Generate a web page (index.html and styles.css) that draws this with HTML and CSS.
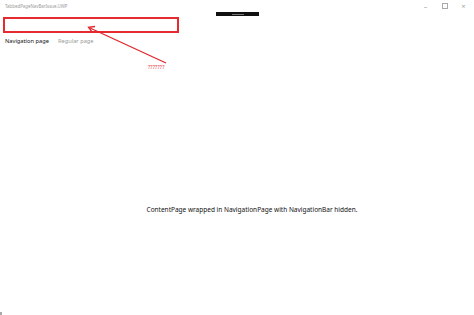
FILE: index.html
```html
<!DOCTYPE html>
<html>
<head>
<meta charset="utf-8">
<link rel="stylesheet" href="styles.css">
</head>
<body>
<div class="window">
  <div class="titlebar">
    <span class="app-title">TabbedPageNavBarIssue.UWP</span>
    <div class="caption-buttons">
      <span class="cap">&#8211;</span>
      <span class="cap cap-max"></span>
      <span class="cap">&#215;</span>
    </div>
  </div>
  <div class="navbar-space"></div>
  <div class="tabs">
    <span class="tab active">Navigation page</span>
    <span class="tab">Regular page</span>
  </div>
  <div class="content">
    <p class="message">ContentPage wrapped in NavigationPage with NavigationBar hidden.</p>
  </div>
  <div class="frame-counter"><span class="frame-mark"></span></div>
  <div class="highlight-box"></div>
  <svg class="arrow" width="474" height="80" viewBox="0 0 474 80">
    <line x1="166" y1="63" x2="90" y2="28" stroke="#e0262b" stroke-width="1.3"/>
    <polyline points="95,26.5 88.5,27.3 92.5,32.5" fill="none" stroke="#e0262b" stroke-width="1.3"/>
  </svg>
  <span class="note">???????</span>
  <span class="corner-mark"></span>
</div>
</body>
</html>
```
FILE: styles.css
```css
html, body {
  margin: 0;
  padding: 0;
  background: #ffffff;
}
body {
  font-family: "Noto Sans", "Open Sans", sans-serif;
  color: #111;
}
.window {
  position: relative;
  width: 474px;
  height: 315px;
  display: flex;
  flex-direction: column;
  overflow: hidden;
}
.titlebar {
  height: 12px;
  display: flex;
  align-items: center;
  justify-content: space-between;
  padding-left: 5px;
}
.app-title {
  font-size: 4.4px;
  color: #9a9a9a;
}
.caption-buttons {
  display: flex;
  align-items: center;
  height: 12px;
  padding-right: 1px;
}
.cap {
  width: 19px;
  display: flex;
  justify-content: center;
  font-size: 7px;
  color: #a0a0a0;
  line-height: 1;
}
.cap-max::before {
  content: "";
  width: 4px;
  height: 4px;
  border: 1px solid #a8a8a8;
}
.navbar-space {
  height: 23px;
}
.tabs {
  display: flex;
  gap: 9px;
  padding-left: 5px;
  height: 12px;
  align-items: center;
}
.tab {
  font-size: 5.7px;
  color: #9a9a9a;
}
.tab.active {
  color: #111;
}
.content {
  flex: 1;
  display: flex;
  align-items: center;
  justify-content: center;
  padding-top: 56px;
}
.message {
  margin: 0;
  font-size: 6.5px;
  color: #111;
  transform: translateX(15px);
}
.frame-counter {
  position: absolute;
  left: 216px;
  top: 12px;
  width: 43px;
  height: 4px;
  background: #111;
  display: flex;
  align-items: center;
  justify-content: center;
}
.frame-mark {
  width: 12px;
  height: 1px;
  background: #777;
}
.highlight-box {
  position: absolute;
  left: 3px;
  top: 17px;
  width: 172px;
  height: 12px;
  border: 2px solid #e52a30;
}
.arrow {
  position: absolute;
  left: 0;
  top: 0;
}
.note {
  position: absolute;
  left: 148px;
  top: 64px;
  font-size: 5px;
  color: #e0262b;
  letter-spacing: 0.2px;
}
.corner-mark {
  position: absolute;
  left: 0;
  top: 312px;
  width: 2px;
  height: 3px;
  background: #aaa;
}
```
